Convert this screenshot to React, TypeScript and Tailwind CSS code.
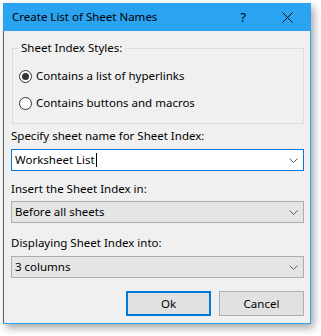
import React from "react";

function Chevron() {
  return (
    <svg width="9" height="5" viewBox="0 0 9 5" className="shrink-0">
      <path d="M0.5 0.5 L4.5 4.5 L8.5 0.5" fill="none" stroke="#5a5a5a" strokeWidth="1" />
    </svg>
  );
}

function Radio({ checked, label }: { checked: boolean; label: string }) {
  return (
    <div className="flex h-[16px] items-center">
      <div className="flex h-[13px] w-[13px] items-center justify-center rounded-full border border-[#333333] bg-white">
        {checked && <div className="h-[7px] w-[7px] rounded-full bg-[#333333]" />}
      </div>
      <span className="ml-[4px] leading-[16px]">{label}</span>
    </div>
  );
}

function Select({ value }: { value: string }) {
  return (
    <div className="flex h-[22px] items-center justify-between border border-[#adadad] bg-[#e5e5e5] pl-[3px] pr-[5px]">
      <span className="leading-[16px]">{value}</span>
      <Chevron />
    </div>
  );
}

export default function App() {
  return (
    <div
      className="h-[336px] w-[321px] bg-white pl-[3px] pt-[3px] text-[11.5px] text-black"
      style={{ fontFamily: '"Noto Sans", "Segoe UI", sans-serif' }}
    >
      <div className="flex h-[321px] w-[308px] flex-col bg-[#2aa3f0] shadow-[3px_4px_8px_rgba(0,0,0,0.35)]">
        <div className="flex h-[28px] shrink-0 items-center pl-[9px]">
          <span className="leading-[16px]">Create List of Sheet Names</span>
          <span className="ml-auto text-[13px] leading-[16px]">?</span>
          <svg width="11" height="11" viewBox="0 0 11 11" className="ml-[36px] mr-[18px]">
            <path d="M0.5 0.5 L10.5 10.5 M10.5 0.5 L0.5 10.5" stroke="#111" strokeWidth="1" />
          </svg>
        </div>
        <div className="mb-[1px] mr-[1px] flex flex-1 flex-col border-l border-[#5f5f5f] bg-[#f0f0f0] pl-[7px] pr-[6px]">
          <div className="relative ml-[1px] mt-[17px] border border-[#dcdcdc] pb-[12px] pl-[6px] pt-[19px]">
            <span className="absolute left-[5px] top-[-9px] bg-[#f0f0f0] px-[3px] leading-[16px]">
              Sheet Index Styles:
            </span>
            <Radio checked label="Contains a list of hyperlinks" />
            <div className="h-[11px]" />
            <Radio checked={false} label="Contains buttons and macros" />
          </div>
          <div className="mt-[4px] leading-[16px]">Specify sheet name for Sheet Index:</div>
          <div className="mt-[5px] flex h-[22px] items-center justify-between border border-[#0078d7] bg-white pl-[3px] pr-[5px]">
            <span className="flex items-center leading-[16px]">
              Worksheet List
              <span className="ml-[1px] inline-block h-[14px] w-[1px] bg-black" />
            </span>
            <Chevron />
          </div>
          <div className="mt-[10px] leading-[16px]">Insert the Sheet Index in:</div>
          <div className="mt-[4px]">
            <Select value="Before all sheets" />
          </div>
          <div className="mt-[12px] leading-[16px]">Displaying Sheet Index into:</div>
          <div className="mt-[5px]">
            <Select value="3 columns" />
          </div>
          <div className="mt-[13px] flex justify-end gap-[8px]">
            <button className="h-[25px] w-[85px] border-2 border-[#0078d7] bg-[#e1e1e1] leading-[16px]">Ok</button>
            <button className="h-[25px] w-[85px] border border-[#adadad] bg-[#e1e1e1] leading-[16px]">Cancel</button>
          </div>
        </div>
      </div>
    </div>
  );
}
